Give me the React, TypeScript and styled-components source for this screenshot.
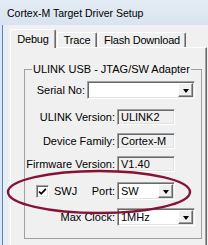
import styled, { createGlobalStyle } from "styled-components";

const GlobalStyle = createGlobalStyle`
  html, body {
    margin: 0;
    padding: 0;
    background: #f0f0f0;
  }
  body {
    font-family: "Liberation Sans", Arial, sans-serif;
    font-size: 11px;
    color: #000;
  }
`;

const Screen = styled.div`
  position: relative;
  width: 208px;
  height: 245px;
  overflow: hidden;
  background: #dfe8f2;
  font-family: "Liberation Sans", Arial, sans-serif;
`;

const TitleBar = styled.div`
  height: 25px;
  display: flex;
  align-items: center;
  padding-left: 7px;
  background: linear-gradient(#e4ecf5, #d9e3ef);
`;

const TitleText = styled.span`
  font-family: "Liberation Sans", Arial, sans-serif;
  font-size: 10.5px;
  line-height: 14px;
  white-space: nowrap;
  color: #000;
`;

const Body = styled.div`
  display: flex;
  height: 220px;
`;

const FrameEdge = styled.div`
  width: 8px;
  flex-shrink: 0;
  background: linear-gradient(
    to right,
    #dce6f1 0 2px,
    #5a86b6 2px 3px,
    #e6edf5 3px
  );
`;

const Client = styled.div`
  flex: 1;
  background: #f0f0f0;
  padding: 4px 0 0 2px;
`;

const TabStrip = styled.div`
  display: flex;
  align-items: flex-end;
  height: 18px;
  position: relative;
  z-index: 1;
`;

const Tab = styled.div<{ $selected?: boolean; $width: number }>`
  box-sizing: border-box;
  flex-shrink: 0;
  width: ${(p) => p.$width}px;
  height: ${(p) => (p.$selected ? "19px" : "15px")};
  margin-bottom: ${(p) => (p.$selected ? "-1px" : "0")};
  margin-left: ${(p) => (p.$selected ? "0" : "1px")};
  padding-top: ${(p) => (p.$selected ? "1px" : "0")};
  display: flex;
  align-items: center;
  justify-content: center;
  font-size: 11px;
  letter-spacing: -0.2px;
  background: #f0f0f0;
  border-top: 1px solid #fff;
  border-left: 1px solid #fff;
  border-right: 1px solid #696969;
  border-radius: 2px 2px 0 0;
  box-shadow: inset -1px 0 #a0a0a0;
  white-space: nowrap;
  line-height: 13px;
`;

const Panel = styled.div`
  box-sizing: border-box;
  width: 197px;
  height: 200px;
  padding: 15px 0 0 13px;
  border-top: 1px solid #fff;
  border-left: 1px solid #fff;
  border-right: 1px solid #696969;
  box-shadow: inset -1px 0 #a0a0a0;
`;

const GroupBox = styled.fieldset`
  box-sizing: border-box;
  width: 178px;
  margin: 0;
  padding: 0 0 12px 0;
  min-width: 0;
  border: 1px solid #a0a0a0;
`;

const Legend = styled.legend`
  margin-left: 7px;
  padding: 0 1px;
  line-height: 13px;
  white-space: nowrap;
`;

const Row = styled.div<{ $top: number }>`
  display: flex;
  align-items: center;
  margin-top: ${(p) => p.$top}px;
`;

const Label = styled.div<{ $width: number }>`
  width: ${(p) => p.$width}px;
  margin-right: 2px;
  text-align: right;
  white-space: nowrap;
  line-height: 13px;
`;

const LabelCell = styled.div<{ $width: number }>`
  width: ${(p) => p.$width}px;
  margin-right: 2px;
  padding-left: 11px;
  box-sizing: border-box;
  display: flex;
  align-items: center;
  justify-content: space-between;
  white-space: nowrap;
  line-height: 13px;
`;

const Sunken = styled.div<{ $width: number; $height: number; $white?: boolean }>`
  box-sizing: border-box;
  width: ${(p) => p.$width}px;
  height: ${(p) => p.$height}px;
  border: 1px solid;
  border-color: #a0a0a0 #fff #fff #a0a0a0;
  box-shadow: inset 1px 1px #696969, inset -1px -1px #e3e3e3;
  background: ${(p) => (p.$white ? "#fff" : "#f0f0f0")};
  display: flex;
  align-items: center;
  padding: 1px 1px 1px 3px;
  line-height: 13px;
  white-space: nowrap;
`;

const ComboValue = styled.div`
  flex: 1;
`;

const DropButton = styled.div`
  box-sizing: border-box;
  width: 15px;
  height: 14px;
  background: #f0f0f0;
  border: 1px solid;
  border-color: #fff #696969 #696969 #fff;
  box-shadow: inset -1px -1px #a0a0a0;
  display: flex;
  align-items: center;
  justify-content: center;
`;

const Arrow = styled.div`
  width: 0;
  height: 0;
  border-left: 3.5px solid transparent;
  border-right: 3.5px solid transparent;
  border-top: 4px solid #000;
  margin-top: 1px;
`;

const CheckGroup = styled.div`
  display: flex;
  align-items: center;
  gap: 5px;
`;

const CheckBox = styled.div`
  box-sizing: border-box;
  width: 13px;
  height: 13px;
  border: 1px solid;
  border-color: #a0a0a0 #fff #fff #a0a0a0;
  box-shadow: inset 1px 1px #696969, inset -1px -1px #e3e3e3;
  background: #fff;
  display: flex;
`;

const Annotation = styled.svg`
  position: absolute;
  left: 0;
  top: 0;
  pointer-events: none;
`;

function Combo({ width, value }: { width: number; value: string }) {
  return (
    <Sunken $width={width} $height={18} $white>
      <ComboValue>{value}</ComboValue>
      <DropButton>
        <Arrow />
      </DropButton>
    </Sunken>
  );
}

function Field({ value }: { value: string }) {
  return (
    <Sunken $width={58} $height={16}>
      {value}
    </Sunken>
  );
}

export default function App() {
  return (
    <>
      <GlobalStyle />
      <Screen>
        <TitleBar>
          <TitleText>Cortex-M Target Driver Setup</TitleText>
        </TitleBar>
        <Body>
          <FrameEdge />
          <Client>
            <TabStrip>
              <Tab $selected $width={46}>
                Debug
              </Tab>
              <Tab $width={40}>Trace</Tab>
              <Tab $width={88}>Flash Download</Tab>
            </TabStrip>
            <Panel>
              <GroupBox>
                <Legend>ULINK USB - JTAG/SW Adapter</Legend>
                <Row $top={5}>
                  <Label $width={60}>Serial No:</Label>
                  <Combo width={108} value="" />
                </Row>
                <Row $top={10}>
                  <Label $width={90}>ULINK Version:</Label>
                  <Field value="ULINK2" />
                </Row>
                <Row $top={8}>
                  <Label $width={90}>Device Family:</Label>
                  <Field value="Cortex-M" />
                </Row>
                <Row $top={7}>
                  <Label $width={90}>Firmware Version:</Label>
                  <Field value="V1.40" />
                </Row>
                <Row $top={10}>
                  <LabelCell $width={90}>
                    <CheckGroup>
                      <CheckBox>
                        <svg width="11" height="11" viewBox="0 0 11 11">
                          <polyline
                            points="2,5.5 4.2,7.8 8.8,2.8"
                            fill="none"
                            stroke="#000"
                            strokeWidth="1.8"
                          />
                        </svg>
                      </CheckBox>
                      <span>SWJ</span>
                    </CheckGroup>
                    <span>Port:</span>
                  </LabelCell>
                  <Combo width={58} value="SW" />
                </Row>
                <Row $top={8}>
                  <Label $width={90}>Max Clock:</Label>
                  <Combo width={78} value="1MHz" />
                </Row>
              </GroupBox>
            </Panel>
          </Client>
        </Body>
        <Annotation width="208" height="245" viewBox="0 0 208 245">
          <ellipse
            cx="99"
            cy="192"
            rx="91"
            ry="21"
            fill="none"
            stroke="#861236"
            strokeWidth="2.4"
          />
        </Annotation>
      </Screen>
    </>
  );
}
